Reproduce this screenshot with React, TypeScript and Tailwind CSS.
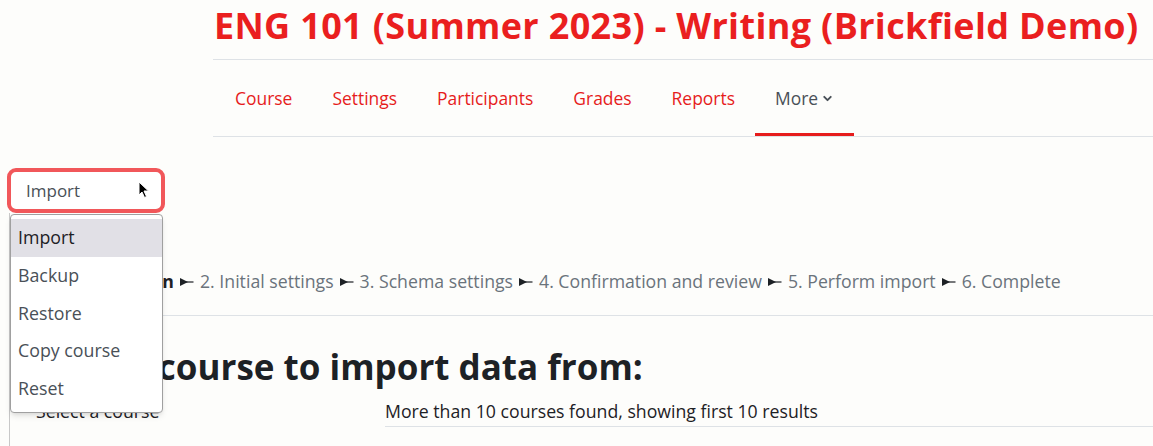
import React from "react";
import { ChevronDown } from "lucide-react";

const navItems = ["Course", "Settings", "Participants", "Grades", "Reports"];
const menuItems = ["Import", "Backup", "Restore", "Copy course", "Reset"];
const steps = [
  "2. Initial settings",
  "3. Schema settings",
  "4. Confirmation and review",
  "5. Perform import",
  "6. Complete",
];

const font = { fontFamily: '"Open Sans", "Noto Sans", sans-serif' };

const Arrow = () => (
  <svg width="14" height="8" viewBox="0 0 14 8" className="shrink-0 mx-[6px] mt-[1px]">
    <path d="M0 0 L8 4 L0 8 Z" fill="#1d2125" />
    <path d="M6 3.4 H13.5 V4.6 H6 Z" fill="#1d2125" />
  </svg>
);

export default function App() {
  return (
    <div
      className="relative w-[1153px] h-[446px] overflow-hidden bg-[#fdfdfb] text-[#1d2125]"
      style={font}
    >
      {/* Page header */}
      <div className="pl-[213px]">
        <div className="h-[60px] border-b border-[#dee2e6] pt-[5px]">
          <h1 className="pl-[1px] text-[36px] font-bold tracking-[0.34px] text-[#ea1f1f] leading-[42px] whitespace-nowrap">
            ENG 101 (Summer 2023) - Writing (Brickfield Demo)
          </h1>
        </div>
        <nav className="h-[77px] border-b border-[#dee2e6] flex items-stretch pl-[2px]">
          {navItems.map((item) => (
            <a
              key={item}
              className="flex items-center px-[20px] text-[17.45px] text-[#e61c1c] pt-[1px]"
            >
              {item}
            </a>
          ))}
          <a className="flex items-center px-[20px] text-[17.45px] text-[#495057] border-b-[3px] border-[#e61c1c] pt-[4px]">
            More
            <ChevronDown className="w-[13px] h-[13px] ml-[3px]" strokeWidth={3.5} />
          </a>
        </nav>
      </div>

      {/* Tertiary navigation select */}
      <div className="pl-[7px] pt-[31px]">
        <div className="w-[158px] h-[45px] rounded-[9px] border-[4px] border-[#f1575a] bg-white flex items-center pl-[15px] text-[17px] text-[#495057]">
          Import
        </div>
      </div>

      {/* Main region */}
      <div className="ml-[9px] border-l border-[#c8c8c8] h-[300px]">
        <div className="h-[103px] flex flex-col justify-end pb-[20px] border-b border-[#dee2e6]">
          <div className="flex items-center text-[17.7px] text-[#6a737b] whitespace-nowrap">
            <div className="w-[164px] shrink-0 flex justify-end overflow-hidden">
              <span className="font-bold text-[#1d2125] whitespace-nowrap">1. Course selection</span>
            </div>
            {steps.map((s) => (
              <React.Fragment key={s}>
                <Arrow />
                <span>{s}</span>
              </React.Fragment>
            ))}
          </div>
        </div>
        <h2 className="mt-[33px] pl-[4px] text-[35px] font-bold leading-none whitespace-nowrap">
          Select a course to import data from:
        </h2>
        <div className="mt-[14px] flex items-start">
          <div className="w-[375px] shrink-0 pl-[26px] text-[17.7px]">Select a course</div>
          <div className="flex-1">
            <div className="text-[17.7px] pb-[1px] border-b border-[#dee2e6]">
              More than 10 courses found, showing first 10 results
            </div>
          </div>
        </div>
      </div>

      {/* Open dropdown list */}
      <div className="absolute left-[10px] top-[214px] w-[153px] h-[199px] bg-white border border-[#a0a0a0] rounded-[4px] shadow-md py-[4px]">
        {menuItems.map((m, i) => (
          <div
            key={m}
            className={`h-[37.6px] flex items-center pl-[7px] text-[17.8px] ${
              i === 0 ? "bg-[#e1e0e6] text-[#1d2125]" : "text-[#495057]"
            }`}
          >
            {m}
          </div>
        ))}
      </div>

      {/* Mouse cursor */}
      <svg
        className="absolute left-[138px] top-[181px]"
        width="12"
        height="18"
        viewBox="0 0 12 18"
      >
        <path d="M1 1 L1 14 L4 11 L6.5 16.5 L8.5 15.5 L6 10 L10.5 10 Z" fill="#000" stroke="#fff" strokeWidth="1" />
      </svg>
    </div>
  );
}
